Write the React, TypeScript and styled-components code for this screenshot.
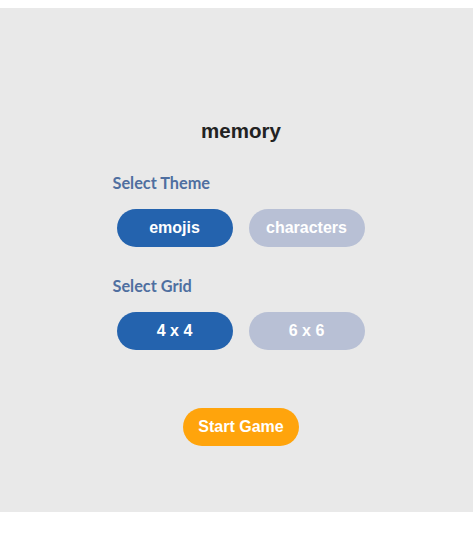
import React, { useState } from "react";
import styled, { createGlobalStyle } from "styled-components";

const GlobalStyle = createGlobalStyle`
  body {
    margin: 0;
    padding-top: 8px;
    font-family: "Liberation Sans", Arial, sans-serif;
    background: #ffffff;
  }
`;

const Board = styled.div`
  width: 473px;
  height: 504px;
  box-sizing: border-box;
  background: #e9e9e9;
  display: flex;
  flex-direction: column;
  align-items: center;
  padding-top: 111px;
`;

const Title = styled.h1`
  margin: 0 0 30px;
  font-size: 20.5px;
  font-weight: 700;
  color: #222222;
  padding-left: 9px;
`;

const Section = styled.div`
  width: 264px;
  display: flex;
  flex-direction: column;
  margin-left: 16px;
  margin-bottom: 29px;
`;

const Label = styled.div`
  font-family: Lato, "Open Sans", sans-serif;
  font-size: 16.3px;
  font-weight: 700;
  color: #4f6fa0;
  margin-bottom: 17px;
`;

const Options = styled.div`
  display: flex;
  gap: 16px;
  padding-left: 4px;
`;

const Pill = styled.button<{ $active?: boolean }>`
  width: 116px;
  height: 38px;
  border: none;
  border-radius: 19px;
  background: ${(p) => (p.$active ? "#2463ae" : "#b8c0d5")};
  color: #ffffff;
  font-family: "Liberation Sans", Arial, sans-serif;
  font-size: 16px;
  font-weight: 700;
  cursor: pointer;
  padding: 0;
`;

const StartButton = styled(Pill)`
  background: #ffa40c;
  margin-top: 29px;
  margin-left: 9px;
`;

export default function App() {
  const [theme, setTheme] = useState("emojis");
  const [grid, setGrid] = useState("4 x 4");

  return (
    <>
      <GlobalStyle />
      <Board>
        <Title>memory</Title>
        <Section>
          <Label>Select Theme</Label>
          <Options>
            {["emojis", "characters"].map((t) => (
              <Pill key={t} $active={theme === t} onClick={() => setTheme(t)}>
                {t}
              </Pill>
            ))}
          </Options>
        </Section>
        <Section>
          <Label>Select Grid</Label>
          <Options>
            {["4 x 4", "6 x 6"].map((g) => (
              <Pill key={g} $active={grid === g} onClick={() => setGrid(g)}>
                {g}
              </Pill>
            ))}
          </Options>
        </Section>
        <StartButton>Start Game</StartButton>
      </Board>
    </>
  );
}
